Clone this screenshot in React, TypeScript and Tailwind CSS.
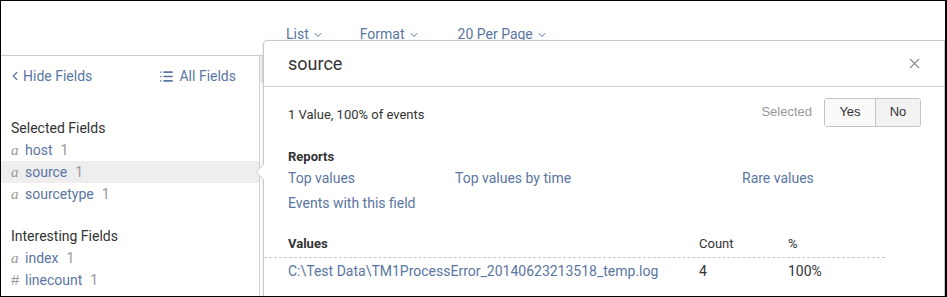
import { ChevronDown, ChevronLeft, List, X } from 'lucide-react'

const link = 'text-[#5a76a2]'

const FieldRow = ({
    type,
    name,
    count,
    active,
}: {
    type: string
    name: string
    count: number
    active?: boolean
}) => (
    <div
        className={`flex items-center h-[22px] pl-[10px] ${active ? 'bg-[#eeeeee]' : ''}`}
    >
        <span
            className={`w-[14px] text-[#999] text-[15px] ${type === 'a' ? 'italic font-["Liberation_Serif",serif]' : 'font-["Liberation_Sans",sans-serif] text-[14px]'}`}
        >
            {type}
        </span>
        <span className={`${link} text-[14px]`}>{name}</span>
        <span className="text-[#999] text-[14px] ml-[8px]">{count}</span>
    </div>
)

export default function App() {
    return (
        <div className="relative w-[947px] h-[297px] overflow-hidden bg-white border border-black border-r-2 font-['Roboto',sans-serif] text-[#333]">
            {/* top bar */}
            <div className="h-[55px] border-b border-[#cccccc] flex items-end pb-[10px] pl-[285px] text-[14px]">
                <div className={`${link} flex items-center gap-[3px]`}>
                    List <ChevronDown className="w-[12px] h-[12px]" strokeWidth={2} />
                </div>
                <div className={`${link} flex items-center gap-[3px] ml-[36px]`}>
                    Format <ChevronDown className="w-[12px] h-[12px]" strokeWidth={2} />
                </div>
                <div className={`${link} flex items-center gap-[3px] ml-[38px]`}>
                    20 Per Page <ChevronDown className="w-[12px] h-[12px]" strokeWidth={2} />
                </div>
            </div>

            <div className="flex">
                {/* sidebar */}
                <div className="w-[259px] h-[242px] border-r border-[#d0d0d0] pt-[10px]">
                    <div className="flex items-center justify-between h-[20px] pl-[7px] pr-[23px] text-[14px]">
                        <div className={`${link} flex items-center`}>
                            <ChevronLeft className="w-[14px] h-[14px]" strokeWidth={2} />
                            <span className="ml-[1px]">Hide Fields</span>
                        </div>
                        <div className={`${link} flex items-center`}>
                            <List className="w-[15px] h-[15px]" strokeWidth={2.5} />
                            <span className="ml-[5px]">All Fields</span>
                        </div>
                    </div>
                    <div className="mt-[31px] pl-[10px] text-[14px] h-[22px] flex items-center">
                        Selected Fields
                    </div>
                    <FieldRow type="a" name="host" count={1} />
                    <FieldRow type="a" name="source" count={1} active />
                    <FieldRow type="a" name="sourcetype" count={1} />
                    <div className="mt-[20px] pl-[10px] text-[14px] h-[22px] flex items-center">
                        Interesting Fields
                    </div>
                    <FieldRow type="a" name="index" count={1} />
                    <FieldRow type="#" name="linecount" count={1} />
                </div>
                <div className="w-[3px] h-[27px] bg-[#efefef] border-r border-[#dcdcdc]" />
            </div>

            {/* popover */}
            <div className="absolute left-[262px] top-[39px] right-0 bottom-[-10px] bg-white border border-[#c8c8c8] rounded-tl-[4px] shadow-[0_1px_3px_rgba(0,0,0,0.12)]">
                {/* arrow */}
                <div className="absolute left-[-8px] top-[122px] w-0 h-0 border-y-[9px] border-y-transparent border-r-[8px] border-r-[#c8c8c8]" />
                <div className="absolute left-[-7px] top-[123px] w-0 h-0 border-y-[8px] border-y-transparent border-r-[7px] border-r-white" />

                <div className="h-[46px] border-b border-[#d0d0d0] flex items-center justify-between pl-[24px] pr-[21px]">
                    <span className="text-[18px] text-[#333]">source</span>
                    <X className="w-[17px] h-[17px] text-[#8a8a8a]" strokeWidth={1.5} />
                </div>

                <div className="pl-[24px] pr-[23px]">
                    <div className="flex items-center justify-between mt-[11px] h-[28px]">
                        <span className="text-[13px] mt-[5px]">1 Value, 100% of events</span>
                        <div className="flex items-center">
                            <span className="text-[13px] text-[#999] font-['Liberation_Sans',sans-serif] mr-[12px]">
                                Selected
                            </span>
                            <div className="flex h-[29px] border border-[#c4c4c4] rounded-[3px] overflow-hidden text-[13px] font-['Liberation_Sans',sans-serif] text-[#333]">
                                <div className="w-[51px] flex items-center justify-center bg-[#f9f9f9] border-r border-[#c4c4c4]">
                                    Yes
                                </div>
                                <div className="w-[44px] flex items-center justify-center bg-[#f2f2f2]">
                                    No
                                </div>
                            </div>
                        </div>
                    </div>

                    <div className="mt-[22px] text-[13px] font-bold h-[18px] leading-[18px]">
                        Reports
                    </div>
                    <div className="flex text-[14px] h-[24px] items-center">
                        <span className={`${link} w-[167px]`}>Top values</span>
                        <span className={`${link} w-[287px]`}>Top values by time</span>
                        <span className={link}>Rare values</span>
                    </div>
                    <div className={`${link} text-[14px] h-[26px] flex items-center`}>
                        Events with this field
                    </div>
                </div>

                <div className="mt-[14px] w-[621px]">
                    <div className="flex text-[13px] h-[28px] items-center border-b border-dashed border-[#c8c8c8] pl-[24px]">
                        <span className="w-[411px] font-bold">Values</span>
                        <span className="w-[89px]">Count</span>
                        <span>%</span>
                    </div>
                    <div className="flex text-[14px] h-[26px] items-center pl-[24px]">
                        <span className={`${link} w-[411px]`}>
                            C:\Test Data\TM1ProcessError_20140623213518_temp.log
                        </span>
                        <span className="w-[89px]">4</span>
                        <span>100%</span>
                    </div>
                </div>
            </div>
        </div>
    )
}
